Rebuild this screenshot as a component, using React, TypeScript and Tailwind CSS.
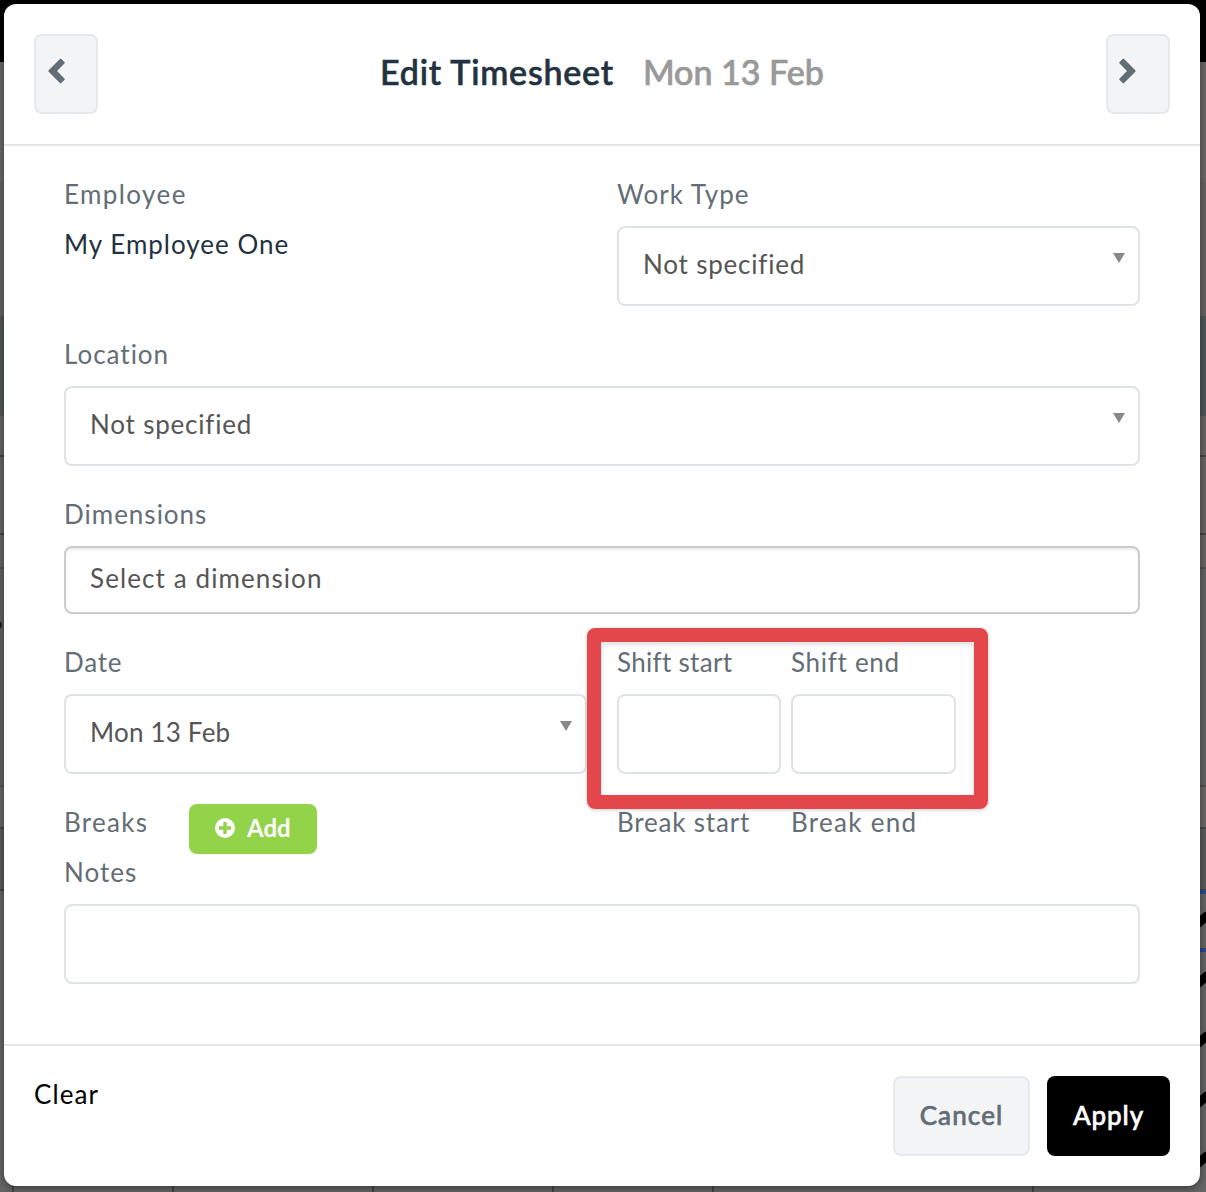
import React from 'react';

interface LabelProps {
  children: React.ReactNode;
  className?: string;
}

interface SelectBoxProps {
  value: string;
  className?: string;
}

interface ChevronProps {
  direction: 'left' | 'right';
}

const Label: React.FC<LabelProps> = ({ children, className = 'tracking-[1px]' }) => (
  <div className={`h-[50px] whitespace-nowrap text-[26px] leading-[36px] text-[#636d75] ${className}`}>{children}</div>
);

// Closed dropdown with the small arrow at the right
const SelectBox: React.FC<SelectBoxProps> = ({ value, className = 'tracking-[0.8px]' }) => (
  <div className="flex h-20 justify-between rounded-lg border-2 border-[#dfe3e7] bg-white pl-6 pr-[13px]">
    <span className={`text-[26px] leading-[72px] text-[#555] ${className}`}>{value}</span>
    <svg className="mt-[25px] h-[10px] w-3" viewBox="0 0 12 10" fill="#888">
      <path d="M0 0h12L6 10z" />
    </svg>
  </div>
);

const Chevron: React.FC<ChevronProps> = ({ direction }) => (
  <svg
    className={`h-[26px] w-[17px] ${direction === 'right' ? '-scale-x-100' : ''}`}
    viewBox="0 0 17 26"
    fill="currentColor"
    stroke="currentColor"
    strokeWidth="2"
    strokeLinejoin="round"
  >
    <path d="M1.4 13L12.6 1.6L15.7 4.7L7.6 13L15.7 21.3L12.6 24.4z" />
  </svg>
);

// Rows of the timesheet grid that show around the dialog
const backdropRows = [
  { height: 62, style: 'bg-black' },
  { height: 120, style: 'bg-[#686766]' },
  { height: 134, style: 'bg-[#636261]' },
  { height: 100, style: 'bg-[#505556]' },
  { height: 41, style: 'bg-[#656462] border-b-2 border-[#444]' },
  { height: 78, style: 'bg-[#656462] border-b-2 border-[#444]' },
  { height: 34, style: 'bg-[#656462] border-b-2 border-[#525252]' },
  { height: 218, style: 'bg-[#616161] border-b-2 border-[#525252]' },
  { height: 42, style: 'bg-[#686766] border-b-2 border-[#474747]' },
  { height: 62, style: 'bg-[#5a5a5a] border-b-2 border-[#444]' },
  { height: 301, style: 'bg-[#646464]' },
];

const Backdrop = () => (
  <div className="absolute inset-0">
    {backdropRows.map((row, i) => (
      <div key={i} className={row.style} style={{ height: row.height }} />
    ))}
    <svg className="absolute inset-0" width="1206" height="1192">
      <circle cx="-2" cy="625" r="4" fill="#222" />
      <path d="M1199 892h7M1199 950h7" stroke="#2b468a" strokeWidth="4" />
      <path
        d="M1196 925l12-10M1196 985l12-10M1196 1045l12-10M1196 1105l12-10M1196 1165l12-10"
        stroke="#000"
        strokeWidth="9"
      />
      <path d="M13 1180v12M173 1180v12M373 1180v12M553 1180v12M713 1180v12M1033 1180v12" stroke="#444" strokeWidth="2" />
    </svg>
  </div>
);

export default function App() {
  return (
    <div className="relative h-[1192px] w-[1206px] overflow-hidden p-1 font-['Lato',sans-serif]">
      <Backdrop />
      <div className="relative flex h-[1182px] w-[1196px] flex-col rounded-xl bg-white shadow-[0_2px_6px_1px_rgba(0,0,0,0.35)]">
        <header className="flex h-[142px] items-start justify-between border-b-2 border-[#e5e5e5] px-[30px] pt-[30px]">
          <button className="flex h-20 w-16 items-start rounded-lg border-2 border-[#e5e8ec] bg-[#f3f4f6] pl-3 pt-[22px] text-[#636d75]">
            <Chevron direction="left" />
          </button>
          <h1 className="flex gap-[29px] whitespace-nowrap pt-[14px] text-[34px] font-medium leading-[48px]">
            <span className="tracking-[0.8px] text-[#233240] [-webkit-text-stroke:0.7px_#233240]">Edit Timesheet</span>
            <span className="text-[#999] [-webkit-text-stroke:0.7px_#999]">Mon 13 Feb</span>
          </h1>
          <button className="flex h-20 w-16 items-start rounded-lg border-2 border-[#e5e8ec] bg-[#f3f4f6] pl-[11px] pt-[22px] text-[#636d75]">
            <Chevron direction="right" />
          </button>
        </header>

        <main className="h-[898px] px-[60px] pt-[30px]">
          <div className="grid h-40 grid-cols-[523px_523px] gap-x-[30px]">
            <div>
              <Label className="tracking-[1.4px]">Employee</Label>
              <div className="text-[26px] leading-[36px] tracking-[1px] text-[#233240]">My Employee One</div>
            </div>
            <div>
              <Label>Work Type</Label>
              <SelectBox value="Not specified" />
            </div>
          </div>

          <div className="h-40">
            <Label>Location</Label>
            <SelectBox value="Not specified" />
          </div>

          <div className="h-[148px]">
            <Label>Dimensions</Label>
            <div className="h-[68px] rounded-lg border-2 border-[#ccc] pl-6 text-[26px] leading-[60px] tracking-[1.1px] text-[#555] shadow-[inset_0_2px_2px_rgba(0,0,0,0.075)]">
              Select a dimension
            </div>
          </div>

          <div className="relative grid h-40 grid-cols-[523px_164px_165px] gap-x-[10px]">
            <div>
              <Label className="tracking-[0.8px]">Date</Label>
              <SelectBox value="Mon 13 Feb" className="tracking-[0.2px]" />
            </div>
            <div className="ml-5 w-[164px]">
              <Label className="tracking-[0.3px]">Shift start</Label>
              <div className="h-20 rounded-lg border-2 border-[#dfe3e7]" />
            </div>
            <div className="ml-5 w-[165px]">
              <Label className="tracking-[0.7px]">Shift end</Label>
              <div className="h-20 rounded-lg border-2 border-[#dfe3e7]" />
            </div>
            {/* Callout drawn over the shift fields */}
            <div className="absolute left-[522.5px] top-[-16.5px] h-[181.5px] w-[401.5px] rounded-lg border-14 border-[#e4474b] shadow-[0_1px_4px_rgba(0,0,0,0.2),inset_0_2px_6px_rgba(0,0,0,0.15)]" />
          </div>

          <div className="flex h-[50px]">
            <div className="w-[125px]">
              <Label className="tracking-[1.3px]">Breaks</Label>
            </div>
            <button className="flex h-[50px] w-32 items-center rounded-lg bg-[#93d34a] pl-[26px] text-white">
              <svg className="mb-[3px] h-5 w-5" viewBox="0 0 20 20">
                <circle cx="10" cy="10" r="10" fill="#fff" />
                <path d="M10 4v12M4 10h12" stroke="#93d34a" strokeWidth="3.4" />
              </svg>
              <span className="mb-0.5 ml-3 text-2xl font-bold">Add</span>
            </button>
            <div className="ml-[300px] w-[174px]">
              <Label className="tracking-[0.8px]">Break start</Label>
            </div>
            <Label className="tracking-[1.3px]">Break end</Label>
          </div>

          <Label>Notes</Label>
          <div className="h-20 rounded-lg border-2 border-[#dfe3e7]" />
        </main>

        <footer className="flex items-start border-t-2 border-[#e5e5e5] px-[30px] pt-[30px]">
          <button className="text-[26px] leading-[36px] tracking-[1.1px] text-black">Clear</button>
          <button className="ml-auto h-20 w-[137px] rounded-lg border-2 border-[#e5e8ec] bg-[#f3f4f6] pb-0.5 text-[26px] font-medium tracking-[1.1px] text-[#636d75] [-webkit-text-stroke:0.6px_#636d75]">
            Cancel
          </button>
          <button className="ml-[17px] h-20 w-[123px] rounded-lg bg-black pb-0.5 text-[26px] font-medium tracking-[0.9px] text-white [-webkit-text-stroke:0.6px_#fff]">
            Apply
          </button>
        </footer>
      </div>
    </div>
  );
}
